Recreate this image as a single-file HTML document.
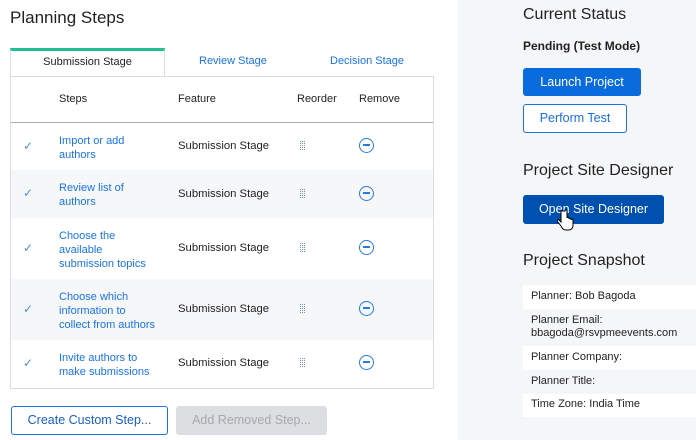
<!DOCTYPE html><html><head><style>
*{box-sizing:border-box;margin:0;padding:0}
body{width:696px;height:440px;background:#fff;font-family:"Liberation Sans",sans-serif;position:relative;overflow:hidden;color:#222}
.a{position:absolute}
.blue{color:#1a73e8}
.rp{position:absolute;left:458px;top:0;width:238px;height:440px;background:#f5f6f8}
.row{position:absolute;left:11px;width:422px;font-size:11px}
.row .ck{position:absolute;left:12px;color:#4a8fe0;font-size:12px}
.row .st{position:absolute;left:48px;color:#1a73e8;line-height:14px}
.row .ft{position:absolute;left:167px;font-size:11.3px}
.row svg{position:absolute;left:289px}
.row .rm{position:absolute;left:348px;width:15px;height:15px;border:1.5px solid #2a7ae2;border-radius:50%}
.row .rm:after{content:"";position:absolute;left:2.5px;top:5px;width:7px;height:1.5px;background:#2a7ae2}
.btn{position:absolute;font-size:12.5px;text-align:center;border-radius:3px}
.sn{position:absolute;left:523px;width:173px;font-size:11px;padding-left:8px;line-height:13px}
</style></head><body>
<svg width="0" height="0" style="position:absolute"><defs><g id="dr"><g fill="#6f8fc8"><rect x="0" y="0" width="1" height="1"/><rect x="2" y="0" width="1" height="1"/><rect x="4" y="0" width="1" height="1"/><rect x="0" y="2" width="1" height="1"/><rect x="2" y="2" width="1" height="1"/><rect x="4" y="2" width="1" height="1"/><rect x="0" y="4" width="1" height="1"/><rect x="2" y="4" width="1" height="1"/><rect x="4" y="4" width="1" height="1"/><rect x="0" y="6" width="1" height="1"/><rect x="2" y="6" width="1" height="1"/><rect x="4" y="6" width="1" height="1"/><rect x="0" y="8" width="1" height="1"/><rect x="2" y="8" width="1" height="1"/><rect x="4" y="8" width="1" height="1"/></g></g></defs></svg>
<div class="a" style="left:10px;top:8px;font-size:17px;color:#222">Planning Steps</div>
<div class="a" style="left:10px;top:48px;width:155px;height:29px;border:1px solid #ddd;border-bottom:none;border-top:3px solid #1fbf8f;font-size:11px;text-align:center;line-height:22px">Submission Stage</div>
<div class="a blue" style="left:199px;top:55px;font-size:11px">Review Stage</div>
<div class="a blue" style="left:330px;top:55px;font-size:11px">Decision Stage</div>
<div class="a" style="left:10px;top:76px;width:424px;height:313px;border:1px solid #ddd"></div>
<div class="a" style="left:164px;top:76px;width:270px;height:1px;background:#ddd"></div>
<div class="a" style="left:11px;top:122px;width:422px;height:1px;background:#aaa"></div>
<div class="a" style="top:93px;left:59px;font-size:11px">Steps</div>
<div class="a" style="top:93px;left:178px;font-size:11px">Feature</div>
<div class="a" style="top:93px;left:297px;font-size:11px">Reorder</div>
<div class="a" style="top:93px;left:359px;font-size:11px">Remove</div>

<div class="row" style="top:123px;height:47px"><span class="ck" style="top:16px">✓</span><span class="st" style="top:11px">Import or add<br>authors</span><span class="ft" style="top:17px">Submission Stage</span><svg style="top:18px" width="5" height="9"><use href="#dr"/></svg><span class="rm" style="top:15px"></span></div>
<div class="row" style="top:170px;height:48px;background:#f6f7f9"><span class="ck" style="top:16px">✓</span><span class="st" style="top:11px">Review list of<br>authors</span><span class="ft" style="top:18px">Submission Stage</span><svg style="top:19px" width="5" height="9"><use href="#dr"/></svg><span class="rm" style="top:16px"></span></div>
<div class="row" style="top:218px;height:61px"><span class="ck" style="top:23px">✓</span><span class="st" style="top:11px">Choose the<br>available<br>submission topics</span><span class="ft" style="top:24px">Submission Stage</span><svg style="top:25px" width="5" height="9"><use href="#dr"/></svg><span class="rm" style="top:22px"></span></div>
<div class="row" style="top:279px;height:61px;background:#f6f7f9"><span class="ck" style="top:23px">✓</span><span class="st" style="top:11px">Choose which<br>information to<br>collect from authors</span><span class="ft" style="top:24px">Submission Stage</span><svg style="top:25px" width="5" height="9"><use href="#dr"/></svg><span class="rm" style="top:22px"></span></div>
<div class="row" style="top:340px;height:48px"><span class="ck" style="top:16px">✓</span><span class="st" style="top:11px">Invite authors to<br>make submissions</span><span class="ft" style="top:17px">Submission Stage</span><svg style="top:18px" width="5" height="9"><use href="#dr"/></svg><span class="rm" style="top:15px"></span></div>

<div class="btn" style="left:11px;top:406px;width:157px;height:29px;border:1px solid #1a73e8;color:#1a5fc8;line-height:27px">Create Custom Step...</div>
<div class="btn" style="left:176px;top:406px;width:151px;height:29px;background:#dcdee1;color:#a5a8ac;line-height:29px">Add Removed Step...</div>

<div class="rp"></div>
<div class="a" style="left:523px;top:6px;font-size:16px">Current Status</div>
<div class="a" style="left:523px;top:39px;font-size:12px;font-weight:bold">Pending (Test Mode)</div>
<div class="btn" style="left:523px;top:68px;width:118px;height:28px;background:#0a6bdc;color:#fff;line-height:28px">Launch Project</div>
<div class="btn" style="left:523px;top:104px;width:104px;height:29px;border:1px solid #1a73e8;background:#fff;color:#1a6fe0;line-height:27px">Perform Test</div>
<div class="a" style="left:523px;top:162px;font-size:16px">Project Site Designer</div>
<div class="btn" style="left:523px;top:195px;width:141px;height:29px;background:#0050b0;color:#fff;line-height:29px">Open Site Designer</div>
<svg class="a" style="left:557px;top:209px" width="18" height="24" viewBox="0 0 18 24"><path d="M4 2v11l-2-2c-1-1-2.5 0-1.5 1.5L4 17c1 2 2 4 5 4h3c2 0 4-2 4-4v-6c0-1-2-1-2 0v-1c0-1-2-1-2 0v-1c0-1-2-1-2 0V2c0-1.5-2-1.5-2 0z" fill="#fff" stroke="#000" stroke-width="1"/></svg>
<div class="a" style="left:523px;top:252px;font-size:16px">Project Snapshot</div>
<div class="sn" style="top:285px;height:24px;background:#fff;padding-top:5px">Planner: Bob Bagoda</div>
<div class="sn" style="top:309px;height:37px;padding-top:5px">Planner Email:<br>bbagoda@rsvpmeevents.com</div>
<div class="sn" style="top:346px;height:24px;background:#fff;padding-top:5px">Planner Company:</div>
<div class="sn" style="top:370px;height:24px;padding-top:5px">Planner Title:</div>
<div class="sn" style="top:394px;height:23px;background:#fff;padding-top:4px">Time Zone: India Time</div>
</body></html>
